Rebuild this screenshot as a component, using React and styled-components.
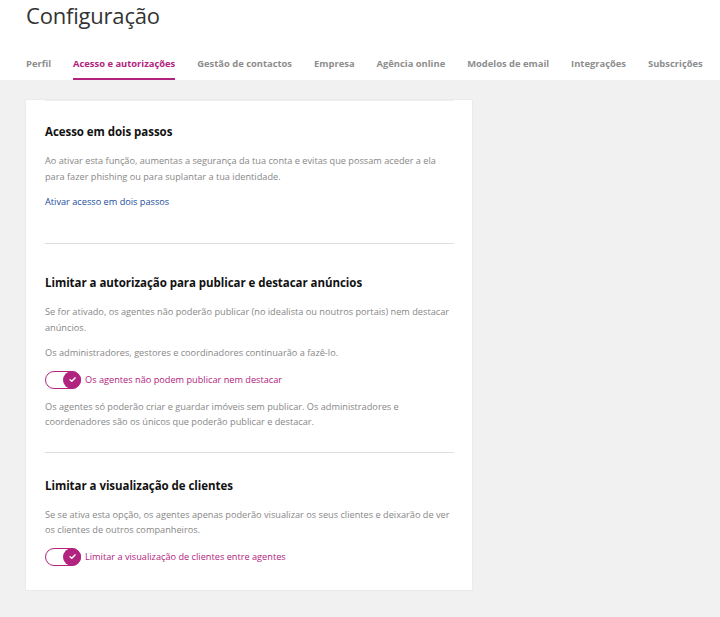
import React from "react";
import styled, { createGlobalStyle } from "styled-components";

const GlobalStyle = createGlobalStyle`
  html, body {
    margin: 0;
    padding: 0;
    background: #f1f1f1;
    font-family: "Open Sans", "Liberation Sans", sans-serif;
  }
`;

const tabs = [
  "Perfil",
  "Acesso e autorizações",
  "Gestão de contactos",
  "Empresa",
  "Agência online",
  "Modelos de email",
  "Integrações",
  "Subscrições",
];

const CheckIcon = () => (
  <svg width="9" height="9" viewBox="0 0 10 10">
    <path d="M2.3 5.2 L4.2 7 L7.8 3.2" fill="none" stroke="#fff" strokeWidth="1.6" strokeLinecap="round" strokeLinejoin="round" />
  </svg>
);

const Toggle = ({ label }) => (
  <ToggleRow>
    <Track>
      <Knob>
        <CheckIcon />
      </Knob>
    </Track>
    <ToggleLabel>{label}</ToggleLabel>
  </ToggleRow>
);

const App = () => {
  return (
    <Page>
      <GlobalStyle />
      <Header>
        <Title>Configuração</Title>
        <Tabs>
          {tabs.map((t, i) => (
            <Tab key={t} active={i === 1}>
              {t}
            </Tab>
          ))}
        </Tabs>
      </Header>

      <Content>
        <Card>
          <Section first top={22} bottom={34}>
            <Heading>Acesso em dois passos</Heading>
            <Text>
              Ao ativar esta função, aumentas a segurança da tua conta e evitas que possam aceder a ela
              para fazer phishing ou para suplantar a tua identidade.
            </Text>
            <Link>Ativar acesso em dois passos</Link>
          </Section>

          <Section top={30} bottom={22}>
            <Heading>Limitar a autorização para publicar e destacar anúncios</Heading>
            <Text>
              Se for ativado, os agentes não poderão publicar (no idealista ou noutros portais) nem destacar
              anúncios.
            </Text>
            <Text>Os administradores, gestores e coordinadores continuarão a fazê-lo.</Text>
            <Toggle label="Os agentes não podem publicar nem destacar" />
            <Text>
              Os agentes só poderão criar e guardar imóveis sem publicar. Os administradores e
              coordenadores são os únicos que poderão publicar e destacar.
            </Text>
          </Section>

          <Section top={24} bottom={24}>
            <Heading>Limitar a visualização de clientes</Heading>
            <Text>
              Se se ativa esta opção, os agentes apenas poderão visualizar os seus clientes e deixarão de ver
              os clientes de outros companheiros.
            </Text>
            <Toggle label="Limitar a visualização de clientes entre agentes" />
          </Section>
        </Card>
      </Content>
    </Page>
  );
};

const Page = styled.div`
  min-height: 617px;
  background: #f1f1f1;
`;

const Header = styled.header`
  background: #fff;
  padding: 0 26px;
`;

const Title = styled.h1`
  margin: 0;
  padding-top: 2px;
  font-size: 22px;
  line-height: 26px;
  font-weight: 400;
  color: #333;
  letter-spacing: -0.2px;
`;

const Tabs = styled.nav`
  display: flex;
  gap: 22px;
  margin-top: 22px;
  white-space: nowrap;
`;

const Tab = styled.a`
  display: block;
  font-size: 9.4px;
  font-weight: 700;
  line-height: 14px;
  padding: 7px 0 7px;
  color: ${(p) => (p.active ? "#b1237e" : "#8d8d8d")};
  border-bottom: 2px solid ${(p) => (p.active ? "#b1237e" : "transparent")};
`;

const Content = styled.main`
  padding: 20px 26px 28px;
`;

const Card = styled.section`
  width: 446px;
  box-sizing: border-box;
  background: #fff;
  padding: 0 18px 0 19px;
  box-shadow: 0 0 1px rgba(0, 0, 0, 0.14);
`;

const Section = styled.div`
  border-top: 1px solid ${(p) => (p.first ? "#f0f0f0" : "#dedede")};
  padding: ${(p) => p.top}px 0 ${(p) => p.bottom}px;

  & > *:last-child {
    margin-bottom: 0;
  }
`;

const Heading = styled.h2`
  margin: 0 0 13px;
  font-size: 11.5px;
  line-height: 17px;
  font-weight: 700;
  color: #111;
  letter-spacing: -0.05px;
`;

const Text = styled.p`
  margin: 0 0 10px;
  font-size: 9.2px;
  line-height: 15.5px;
  color: #878787;
`;

const Link = styled.a`
  display: block;
  font-size: 9.2px;
  line-height: 15px;
  color: #1b4c9c;
`;

const ToggleRow = styled.div`
  display: flex;
  align-items: center;
  gap: 4px;
  margin: 0 0 10px;
`;

const Track = styled.span`
  display: flex;
  justify-content: flex-end;
  align-items: center;
  width: 36px;
  height: 18px;
  box-sizing: border-box;
  border: 1px solid #b1237e;
  border-radius: 10px;
  background: #fff;
`;

const Knob = styled.span`
  display: flex;
  align-items: center;
  justify-content: center;
  width: 18px;
  height: 18px;
  margin-right: -1px;
  border-radius: 50%;
  background: #b1237e;
`;

const ToggleLabel = styled.span`
  font-size: 9.2px;
  font-weight: 500;
  color: #b1237e;
`;

export default App;
